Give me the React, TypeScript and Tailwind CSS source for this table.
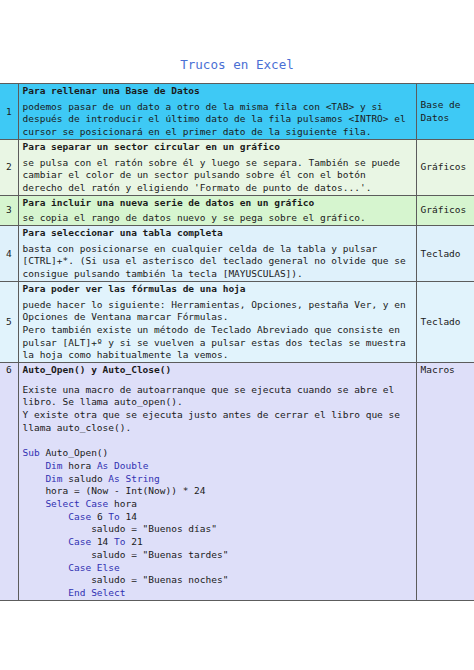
import type { ReactNode } from "react";

type Row = {
  n: string;
  bg: string;
  title: string;
  body: ReactNode;
  cat: ReactNode;
  top?: boolean;
};

const K = ({ children }: { children: ReactNode }) => (
  <span className="text-[#3131b2]">{children}</span>
);

const code = (
  <div className="whitespace-pre">
    <K>Sub</K> Auto_Open(){"\n"}
    {"    "}<K>Dim</K> hora <K>As Double</K>{"\n"}
    {"    "}<K>Dim</K> saludo <K>As String</K>{"\n"}
    {"    "}hora = (Now - Int(Now)) * 24{"\n"}
    {"    "}<K>Select Case</K> hora{"\n"}
    {"        "}<K>Case</K> 6 <K>To</K> 14{"\n"}
    {"            "}saludo = "Buenos días"{"\n"}
    {"        "}<K>Case</K> 14 <K>To</K> 21{"\n"}
    {"            "}saludo = "Buenas tardes"{"\n"}
    {"        "}<K>Case Else</K>{"\n"}
    {"            "}saludo = "Buenas noches"{"\n"}
    {"        "}<K>End Select</K>
  </div>
);

const rows: Row[] = [
  {
    n: "1",
    bg: "bg-[#3ec9f5]",
    title: "Para rellenar una Base de Datos",
    body: "podemos pasar de un dato a otro de la misma fila con <TAB> y si después de introducir el último dato de la fila pulsamos <INTRO> el cursor se posicionará en el primer dato de la siguiente fila.",
    cat: "Base de Datos",
  },
  {
    n: "2",
    bg: "bg-[#e9f6e4]",
    title: "Para separar un sector circular en un gráfico",
    body: "se pulsa con el ratón sobre él y luego se separa. También se puede cambiar el color de un sector pulsando sobre él con el botón derecho del ratón y eligiendo 'Formato de punto de datos...'.",
    cat: "Gráficos",
  },
  {
    n: "3",
    bg: "bg-[#d6f5cf]",
    title: "Para incluir una nueva serie de datos en un gráfico",
    body: "se copia el rango de datos nuevo y se pega sobre el gráfico.",
    cat: "Gráficos",
  },
  {
    n: "4",
    bg: "bg-[#dff1fb]",
    title: "Para seleccionar una tabla completa",
    body: "basta con posicionarse en cualquier celda de la tabla y pulsar [CTRL]+*. (Si usa el asterisco del teclado general no olvide que se consigue pulsando también la tecla [MAYUSCULAS]).",
    cat: "Teclado",
  },
  {
    n: "5",
    bg: "bg-[#e1f3fc]",
    title: "Para poder ver las fórmulas de una hoja",
    body: (
      <>
        <div>
          puede hacer lo siguiente: Herramientas, Opciones, pestaña Ver, y en
          Opciones de Ventana marcar Fórmulas.
        </div>
        <div>
          Pero también existe un método de Teclado Abreviado que consiste en
          pulsar [ALT]+º y si se vuelven a pulsar estas dos teclas se muestra
          la hoja como habitualmente la vemos.
        </div>
      </>
    ),
    cat: "Teclado",
  },
  {
    n: "6",
    bg: "bg-[#dedff9]",
    title: "Auto_Open() y Auto_Close()",
    body: (
      <>
        <div>
          Existe una macro de autoarranque que se ejecuta cuando se abre el
          libro. Se llama auto_open().
        </div>
        <div>
          Y existe otra que se ejecuta justo antes de cerrar el libro que se
          llama auto_close().
        </div>
        <div className="h-[12.7px]" />
        {code}
      </>
    ),
    cat: "Macros",
    top: true,
  },
];

export default function App() {
  return (
    <div className="min-h-[670px] bg-white pt-[57px] font-['DejaVu_Sans_Mono',monospace] text-[#1a1a1a]">
      <h1 className="mb-[11px] text-center text-[12.6px] leading-[15px] text-[#4a6fd4]">
        Trucos en Excel
      </h1>

      <table className="w-[474px] table-fixed border-collapse border-t border-[#5c5c5c] text-[9.5px] leading-[12.7px]">
        <colgroup>
          <col className="w-[18px]" />
          <col className="w-[398px]" />
          <col className="w-[58px]" />
        </colgroup>
        <tbody>
          {rows.map((r) => (
            <tr key={r.n} className={`${r.bg} border-b border-[#5c5c5c]`}>
              <td
                className={`border-r border-[#5c5c5c] pt-[1px] text-center ${
                  r.top ? "align-top" : "align-middle"
                }`}
              >
                {r.n}
              </td>
              <td className="border-r border-[#5c5c5c] pl-[4px] pr-[8px] pt-[1px] pb-0 align-top">
                <div className="font-bold">{r.title}</div>
                <div className={r.top ? "mt-[7px]" : "mt-[3px]"}>{r.body}</div>
              </td>
              <td
                className={`pl-[4px] pt-[1px] ${
                  r.top ? "align-top" : "align-middle"
                }`}
              >
                {r.cat}
              </td>
            </tr>
          ))}
        </tbody>
      </table>
    </div>
  );
}
